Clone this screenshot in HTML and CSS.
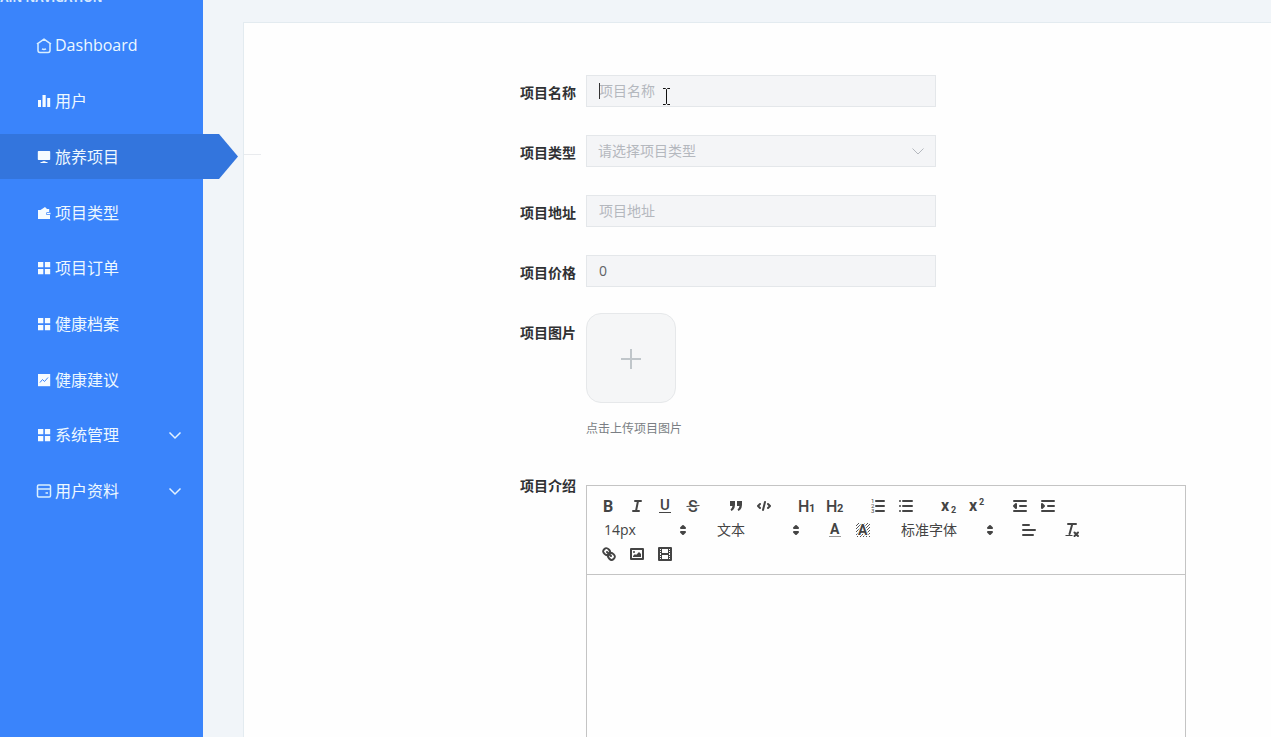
FILE: index.html
```html
<!DOCTYPE html>
<html lang="zh-CN">
<head>
    <meta charset="UTF-8">
    <meta name="viewport" content="width=device-width, initial-scale=1.0">
    <title>旅养项目</title>
    <link rel="stylesheet" href="styles.css">
</head>
<body>
    <div class="layout">
        <!-- Sidebar -->
        <nav class="sidebar">
            <div class="nav-title">MAIN NAVIGATION</div>
            <ul class="menu">
                <li><a href="#">
                    <svg class="menu-icon" viewBox="0 0 16 16"><path class="line" d="M8 1.2 14 5.4V12.6Q14 14.4 12.2 14.4H3.8Q2 14.4 2 12.6V5.4Z M1 6.2 2 5.4 M15 6.2 14 5.4 M6 10.8Q8 12 10 10.8"/></svg>
                    <span>Dashboard</span></a></li>
                <li><a href="#">
                    <svg class="menu-icon" viewBox="0 0 16 16"><path d="M2 7h3v7H2zM6.5 2h3.2v12H6.5zM11.2 5h3v9h-3z"/></svg>
                    <span>用户</span></a></li>
                <li class="active"><a href="#">
                    <svg class="menu-icon" viewBox="0 0 16 16"><path d="M2.5 2h11q.7 0 .7.7v7.600q0 .7-.7.7h-11q-.7 0-.7-.7V2.700q0-.7.7-.7zM6.500 12.200h3v.8h2v1h-7v-1h2z"/></svg>
                    <span>旅养项目</span></a></li>
                <li><a href="#">
                    <svg class="menu-icon" viewBox="0 0 16 16"><path d="M2 5h2.500L9 2l2 2h2.200v3H11.500q-1.500 0-1.500 1.500T11.500 10H14v4H2zM11.500 7.700h3v1.600h-3q-.8 0-.8-.8t.8-.8z"/></svg>
                    <span>项目类型</span></a></li>
                <li><a href="#">
                    <svg class="menu-icon" viewBox="0 0 16 16"><path d="M2 2h5.300v5.300H2zM8.900 2h5.300v5.300H8.900zM2 8.900h5.300v5.300H2zM8.900 8.900h5.300v5.300H8.900z"/></svg>
                    <span>项目订单</span></a></li>
                <li><a href="#">
                    <svg class="menu-icon" viewBox="0 0 16 16"><path d="M2 2h5.300v5.300H2zM8.900 2h5.300v5.300H8.900zM2 8.900h5.300v5.300H2zM8.900 8.900h5.300v5.300H8.900z"/></svg>
                    <span>健康档案</span></a></li>
                <li><a href="#">
                    <svg class="menu-icon" viewBox="0 0 16 16"><path d="M2 2h12.200v12.200H2z"/><path class="trend" d="M4 10.500 6.500 7.500 8.500 9.500 12 5.500"/></svg>
                    <span>健康建议</span></a></li>
                <li><a href="#">
                    <svg class="menu-icon" viewBox="0 0 16 16"><path d="M2 2h5.300v5.300H2zM8.900 2h5.300v5.300H8.900zM2 8.900h5.300v5.300H2zM8.900 8.900h5.300v5.300H8.900z"/></svg>
                    <span>系统管理</span>
                    <svg class="menu-arrow" viewBox="0 0 14 14"><path d="M1.500 4.500 7 10 12.500 4.500"/></svg></a></li>
                <li><a href="#">
                    <svg class="menu-icon" viewBox="0 0 16 16"><path class="line" d="M2.700 2h10.600q1.200 0 1.200 1.200v9.600q0 1.200-1.200 1.200H2.700q-1.200 0-1.200-1.200V3.200Q1.500 2 2.700 2zM1.500 6h13M9.500 10h2.500"/></svg>
                    <span>用户资料</span>
                    <svg class="menu-arrow" viewBox="0 0 14 14"><path d="M1.500 4.500 7 10 12.500 4.500"/></svg></a></li>
            </ul>
        </nav>

        <!-- Project form -->
        <main class="card">
            <form class="project-form">
                <div class="form-row">
                    <label for="projectName">项目名称</label>
                    <div class="field">
                        <input type="text" id="projectName" placeholder="项目名称">
                        <span class="caret"></span>
                        <svg class="pointer" viewBox="0 0 9 17"><path d="M1 .5h2.500l1 1 1-1H8M4.500 1.500v14M1 16.500h2.500l1-1 1 1H8"/></svg>
                    </div>
                </div>
                <div class="form-row">
                    <label for="projectType">项目类型</label>
                    <div class="field">
                        <select id="projectType"><option>请选择项目类型</option></select>
                        <svg class="select-arrow" viewBox="0 0 14 14"><path d="M1.500 4.500 7 10 12.500 4.500"/></svg>
                    </div>
                </div>
                <div class="form-row">
                    <label for="projectAddress">项目地址</label>
                    <div class="field"><input type="text" id="projectAddress" placeholder="项目地址"></div>
                </div>
                <div class="form-row">
                    <label for="projectPrice">项目价格</label>
                    <div class="field"><input type="text" id="projectPrice" value="0"></div>
                </div>
                <div class="form-row">
                    <label for="projectImage">项目图片</label>
                    <div>
                        <button type="button" class="upload" id="projectImage" aria-label="上传">
                            <svg viewBox="0 0 20 20"><path d="M10 0v20M0 10h20"/></svg>
                        </button>
                        <div class="tip">点击上传项目图片</div>
                    </div>
                </div>
                <div class="form-row">
                    <label for="projectIntro">项目介绍</label>
                    <div class="editor">
                        <div class="toolbar">
                            <span class="formats">
                                <button type="button"><svg viewBox="0 0 18 18"><text class="letter" x="3" y="14.500">B</text></svg></button>
                                <button type="button"><svg viewBox="0 0 18 18"><path class="stroke" d="M7 4h6M5 14h6M8 14 10 4"/></svg></button>
                                <button type="button"><svg viewBox="0 0 18 18"><text class="letter medium under" x="4" y="13">U</text><path class="thin" d="M3 15.500h12"/></svg></button>
                                <button type="button"><svg viewBox="0 0 18 18"><text class="letter medium" x="4" y="15">S</text><path class="gap" d="M2.500 10.700h13"/><path class="thin" d="M2.500 9.500 15.500 8.500"/></svg></button>
                            </span>
                            <span class="formats">
                                <button type="button"><svg viewBox="0 0 18 18"><path class="fill" d="M3 4h5v4q0 4-3.500 6l-1-1.500Q5 11.500 5.500 9H3zM10 4h5v4q0 4-3.500 6l-1-1.500q1.500-1 2-3.500H10z"/></svg></button>
                                <button type="button"><svg viewBox="0 0 18 18"><path class="stroke" d="M5 7 3 9 5 11M13 7 15 9 13 11M10 5 8 13"/></svg></button>
                            </span>
                            <span class="formats">
                                <button type="button"><svg viewBox="0 0 18 18"><text class="letter medium" x="0" y="15">H</text><text class="digit" x="11" y="15">1</text></svg></button>
                                <button type="button"><svg viewBox="0 0 18 18"><text class="letter medium" x="0" y="15">H</text><text class="digit" x="11" y="15">2</text></svg></button>
                            </span>
                            <span class="formats">
                                <button type="button"><svg viewBox="0 0 18 18"><path class="stroke" d="M7 4h8M7 9h8M7 14h8"/><text class="tiny" x="2" y="6">1</text><text class="tiny" x="2" y="11">2</text><text class="tiny" x="2" y="16">3</text></svg></button>
                                <button type="button"><svg viewBox="0 0 18 18"><path class="stroke" d="M6 4h9M6 9h9M6 14h9M3 4h0M3 9h0M3 14h0"/></svg></button>
                            </span>
                            <span class="formats">
                                <button type="button"><svg viewBox="0 0 18 18"><text class="letter" x="1" y="14">x</text><text class="script" x="11" y="16">2</text></svg></button>
                                <button type="button"><svg viewBox="0 0 18 18"><text class="letter" x="1" y="14">x</text><text class="script" x="11" y="8">2</text></svg></button>
                            </span>
                            <span class="formats">
                                <button type="button"><svg viewBox="0 0 18 18"><path class="stroke" d="M3 4h12M3 14h12M9 9h6"/><path class="fill stroke" d="M5 7V11L3 9Z"/></svg></button>
                                <button type="button"><svg viewBox="0 0 18 18"><path class="stroke" d="M3 4h12M3 14h12M9 9h6"/><path class="fill stroke" d="M3 7V11L5 9Z"/></svg></button>
                            </span>
                            <span class="formats">
                                <span class="picker">
                                    <select aria-label="字号"><option>14px</option></select>
                                    <svg viewBox="0 0 18 18"><path class="fill stroke" d="M7 11 9 13 11 11ZM7 7 9 5 11 7Z"/></svg>
                                </span>
                            </span>
                            <span class="formats">
                                <span class="picker">
                                    <select aria-label="标题"><option>文本</option></select>
                                    <svg viewBox="0 0 18 18"><path class="fill stroke" d="M7 11 9 13 11 11ZM7 7 9 5 11 7Z"/></svg>
                                </span>
                            </span>
                            <span class="formats">
                                <button type="button"><svg viewBox="0 0 18 18"><text class="letter small" x="4" y="13">A</text><path class="underline" d="M3 15.500h12"/></svg></button>
                                <button type="button"><svg viewBox="0 0 18 18">
                                    <path class="hatch" d="M2 5 5 2M2 8 8 2M2 11 11 2M2 14 14 2M3 16 16 3M6 16 16 6M9 16 16 9M12 16 16 12M15 16 16 15"/>
                                    <text class="letter small halo" x="4" y="14">A</text></svg></button>
                            </span>
                            <span class="formats">
                                <span class="picker wide">
                                    <select aria-label="字体"><option>标准字体</option></select>
                                    <svg viewBox="0 0 18 18"><path class="fill stroke" d="M7 11 9 13 11 11ZM7 7 9 5 11 7Z"/></svg>
                                </span>
                            </span>
                            <span class="formats">
                                <button type="button"><svg viewBox="0 0 18 18"><path class="stroke" d="M3 9h12M3 14h10M3 4h6"/></svg></button>
                            </span>
                            <span class="formats">
                                <button type="button"><svg viewBox="0 0 18 18"><path class="stroke" d="M5 3h8M6.500 13 9.300 3M11.500 11.500l3.500 3.500M15 11.500l-3.500 3.500"/><path class="thin" d="M2.500 14.500h7"/></svg></button>
                            </span>
                            <span class="formats">
                                <button type="button"><svg viewBox="0 0 18 18"><path class="stroke" d="M7 7 11 11M8.900 4.577a3.476 3.476 0 0 1 .36 4.679A3.476 3.476 0 0 1 4.577 8.900C3.185 7.500 2.035 6.400 4.217 4.217S7.500 3.185 8.900 4.577ZM13.423 9.100a3.476 3.476 0 0 0-4.679-.36 3.476 3.476 0 0 0 .36 4.679c1.392 1.392 2.500 2.542 4.679.36S14.815 10.500 13.423 9.100Z"/></svg></button>
                                <button type="button"><svg viewBox="0 0 18 18"><rect class="stroke" x="3" y="4" width="12" height="10"/><circle class="fill" cx="6" cy="7" r="1"/><path class="fill" d="M5 12V11L7 9 8 10 11 7 13 9V12Z"/></svg></button>
                                <button type="button"><svg viewBox="0 0 18 18"><rect class="stroke" x="3" y="3" width="12" height="12"/><path class="fill" d="M5 3h1v12H5zM12 3h1v12h-1zM5 8h8v2H5zM3 5h3v1H3zM3 7h3v1H3zM3 10h3v1H3zM3 12h3v1H3zM12 5h3v1h-3zM12 7h3v1h-3zM12 10h3v1h-3zM12 12h3v1h-3z"/></svg></button>
                            </span>
                        </div>
                        <textarea id="projectIntro"></textarea>
                    </div>
                </div>
            </form>
        </main>
    </div>
</body>
</html>
```
FILE: styles.css
```css
* {
    box-sizing: border-box;
}
body {
    margin: 0;
    font-family: "Open Sans", "Noto Sans CJK SC", sans-serif;
    font-size: 14px;
    color: #303133;
    background-color: #f1f5f9;
}
button,
input,
select,
textarea {
    font-family: inherit;
    font-size: 14px;
}
svg {
    display: block;
    flex: none;
}
.layout {
    display: flex;
    height: 100vh;
    overflow: hidden;
}

/* sidebar */
.sidebar {
    flex: none;
    width: 203px;
    background-color: #3a84fb;
}
.nav-title {
    height: 16px;
    margin: -10px 0 17px -11px;
    line-height: 16px;
    font-size: 12px;
    font-weight: bold;
    color: #d5e8ff;
}
.menu {
    margin: 0;
    padding: 0;
    list-style: none;
}
.menu li {
    margin-bottom: 11px;
}
.menu li:nth-child(3n+1) {
    margin-bottom: 10px;
}
.menu a {
    display: flex;
    align-items: center;
    height: 45px;
    padding: 0 21px 0 36px;
    font-size: 16px;
    color: #edf8ff;
    text-decoration: none;
}
.menu span {
    padding-bottom: 2px;
}
.menu .active a {
    width: 238px;
    background-color: #3375dd;
    clip-path: polygon(0 0, 219px 0, 100% 50%, 219px 100%, 0 100%);
}
.menu-icon {
    width: 16px;
    height: 16px;
    margin-right: 3px;
    fill: #f5fbff;
}
.menu-icon .line {
    fill: none;
    stroke: #d9efff;
    stroke-width: 1.5;
}
.menu-icon .trend {
    fill: none;
    stroke: #3a84fb;
}
.menu-arrow {
    width: 14px;
    height: 14px;
    margin-left: auto;
    fill: none;
    stroke: #e3f2ff;
    stroke-width: 1.5;
}

/* form */
.card {
    position: relative;
    flex: 1;
    min-width: 0;
    margin: 22px 0 0 40px;
    padding: 50px 0 0 265px;
    border-top: 1px solid #e3ebf0;
    border-left: 1px solid #e3ebf0;
    background-color: #fefefe;
}
.card::before {
    content: "";
    position: absolute;
    top: 131px;
    left: 0;
    width: 17px;
    border-top: 1px solid #e9ebee;
}
.form-row {
    display: flex;
    align-items: flex-start;
    margin-bottom: 20px;
}
.form-row > label {
    flex: none;
    width: 77px;
    padding-right: 10px;
    line-height: 40px;
    font-weight: bold;
    text-align: right;
}
.field {
    position: relative;
    width: 350px;
    height: 40px;
    padding-top: 2px;
}
.field input,
.field select {
    display: block;
    width: 100%;
    height: 32px;
    padding: 0 12px 2px;
    border: 1px solid #e4e7ea;
    border-radius: 0;
    outline: none;
    background-color: #f4f5f7;
    color: #606266;
    appearance: none;
}
.field select {
    padding: 0 11px 2px;
    color: #b4b8be;
}
.field input::placeholder {
    color: #b4b8be;
}
.caret {
    position: absolute;
    top: 10px;
    left: 13px;
    width: 1px;
    height: 16px;
    background-color: #333;
}
.pointer {
    position: absolute;
    top: 15px;
    left: 76px;
    width: 9px;
    height: 17px;
    fill: none;
    stroke: #111;
}
.select-arrow {
    position: absolute;
    top: 11px;
    right: 11px;
    width: 14px;
    height: 14px;
    fill: none;
    stroke: #b4b8be;
    pointer-events: none;
}
.upload {
    display: flex;
    align-items: center;
    justify-content: center;
    width: 90px;
    height: 90px;
    padding: 2px 0 0;
    border: 1px solid #e6e8ea;
    border-radius: 15px;
    background-color: #f5f6f7;
    cursor: pointer;
}
.upload svg {
    width: 20px;
    height: 20px;
    fill: none;
    stroke: #c0c6ca;
    stroke-width: 2;
}
.tip {
    margin-top: 8px;
    line-height: 35px;
    font-size: 12px;
    color: #7a7e84;
}

/* rich text editor */
.editor {
    flex: none;
    width: 600px;
    margin-top: 19px;
    border: 1px solid #c4c4c4;
}
.toolbar {
    display: flex;
    flex-wrap: wrap;
    padding: 8px;
    border-bottom: 1px solid #c4c4c4;
}
.formats {
    display: flex;
    margin-right: 15px;
}
.toolbar button {
    width: 28px;
    height: 24px;
    padding: 3px 5px;
    border: none;
    background: none;
    cursor: pointer;
}
.toolbar svg {
    width: 18px;
    height: 18px;
    fill: none;
    overflow: visible;
}
.toolbar .stroke {
    stroke: #444;
    stroke-width: 2;
    stroke-linecap: round;
    stroke-linejoin: round;
}
.toolbar .fill {
    fill: #444;
}
.toolbar .thin {
    stroke: #444;
}
.toolbar .gap {
    stroke: #fefefe;
}
.toolbar .underline {
    stroke: #999;
}
.toolbar .hatch {
    stroke: #555;
}
.toolbar text {
    fill: #444;
    font-family: Roboto, sans-serif;
    font-weight: bold;
}
.letter {
    font-size: 16px;
}
.toolbar .medium {
    font-weight: 500;
}
.toolbar .under {
    font-size: 15px;
}
.toolbar .small {
    font-size: 14px;
}
.toolbar .halo {
    stroke: #fefefe;
    stroke-width: 2;
    paint-order: stroke;
}
.digit {
    font-size: 11px;
}
.script {
    font-size: 9px;
}
.toolbar .tiny {
    font-size: 6px;
    font-weight: 400;
}
.picker {
    position: relative;
    width: 98px;
    height: 24px;
}
.picker.wide {
    width: 108px;
}
.picker select {
    width: 100%;
    height: 24px;
    padding: 0 9px 2px;
    border: none;
    outline: none;
    background: none;
    color: #444;
    appearance: none;
}
.picker svg {
    position: absolute;
    top: 3px;
    right: 1px;
    pointer-events: none;
}
.editor textarea {
    display: block;
    width: 100%;
    height: 300px;
    padding: 12px 15px;
    border: none;
    outline: none;
    background: none;
    resize: none;
}
```
